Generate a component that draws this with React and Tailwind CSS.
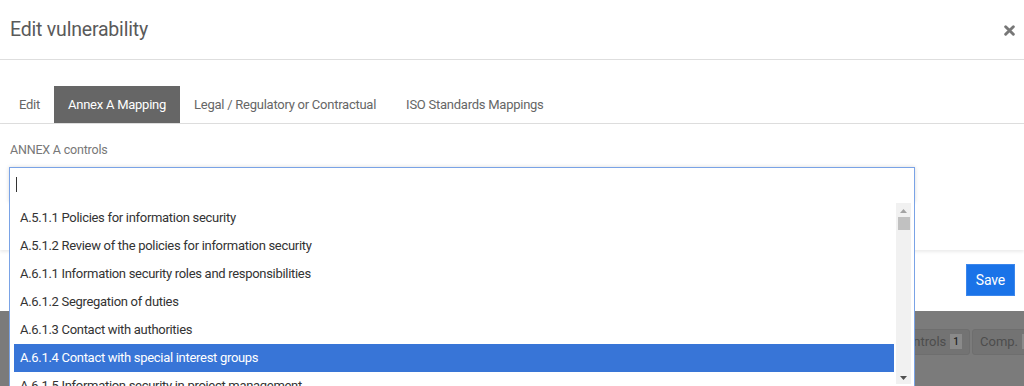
import { useState } from 'react';

const controls = [
  'A.5.1.1 Policies for information security',
  'A.5.1.2 Review of the policies for information security',
  'A.6.1.1 Information security roles and responsibilities',
  'A.6.1.2 Segregation of duties',
  'A.6.1.3 Contact with authorities',
  'A.6.1.4 Contact with special interest groups',
  'A.6.1.5 Information security in project management',
];

const tabs = [
  { label: 'Edit', cls: 'pl-[10px] pr-[14px]' },
  { label: 'Annex A Mapping', cls: 'px-[14px]' },
  { label: 'Legal / Regulatory or Contractual', cls: 'px-[14px]' },
  { label: 'ISO Standards Mappings', cls: 'pl-[16px] pr-[14px]' },
];

export default function App() {
  const [activeTab, setActiveTab] = useState(1);
  const [hovered] = useState(5);

  return (
    <div className="relative w-[1024px] h-[386px] overflow-hidden bg-white font-['Roboto',sans-serif]">
      {/* Header */}
      <div className="h-[60px] flex items-center justify-between pl-[10px] pr-[9px] border-b border-[#dedede]">
        <h1 className="text-[19.5px] text-[#5a5a5a] tracking-[-0.2px]">Edit vulnerability</h1>
        <button className="text-[#777] mt-[1px]">
          <svg width="11" height="11" viewBox="0 0 10 10">
            <path d="M1.5 1.5 L8.5 8.5 M8.5 1.5 L1.5 8.5" stroke="currentColor" strokeWidth="2.6" strokeLinecap="round" />
          </svg>
        </button>
      </div>

      {/* Tabs */}
      <div className="pt-[26px] flex border-b border-[#dedede] pl-[9px]">
        {tabs.map((t, i) => (
          <button
            key={t.label}
            onClick={() => setActiveTab(i)}
            className={`h-[37px] text-[13px] tracking-[-0.25px] ${t.cls} ${
              activeTab === i ? 'bg-[#666] text-white' : 'text-[#666]'
            }`}
          >
            {t.label}
          </button>
        ))}
      </div>

      {/* Body */}
      <div className="px-[9px] pt-[17px] pb-[48px] shadow-[0_2px_3px_rgba(0,0,0,0.08)] relative z-10">
        <div className="text-[12.5px] text-[#777] pl-[1px] tracking-[-0.2px]">ANNEX A controls</div>
        <div className="relative mt-[7px] w-[906px]">
          <div className="h-[35px] border border-[#7aa3e6] shadow-[0_0_4px_rgba(0,0,0,0.15)] flex items-center pl-[6px]">
            <span className="w-[1px] h-[15px] bg-[#333]" />
          </div>
          {/* Dropdown list */}
          <div className="absolute left-0 top-[34px] w-[906px] h-[200px] bg-white border-x border-[#7aa3e6] flex pt-[3px] pl-[4px] z-20">
            <ul className="flex-1 flex flex-col">
              {controls.map((c, i) => (
                <li
                  key={c}
                  className={`h-[28px] shrink-0 flex items-center pl-[6px] text-[13px] tracking-[-0.3px] ${
                    hovered === i ? 'bg-[#3875d7] text-white' : 'text-[#333]'
                  }`}
                >
                  {c}
                </li>
              ))}
            </ul>
            <div className="w-[15px] ml-[2px] mr-[3px] -mt-[1px] bg-[#f1f1f1] flex flex-col items-center h-[181px]">
              <svg width="7" height="4" viewBox="0 0 7 4" className="mt-[6px]">
                <path d="M0 4 L3.5 0 L7 4 Z" fill="#a3a3a3" />
              </svg>
              <div className="w-[12px] h-[13px] bg-[#c1c1c1] mt-[4px]" />
              <div className="flex-1" />
              <svg width="7" height="4" viewBox="0 0 7 4" className="mb-[4px]">
                <path d="M0 0 L3.5 4 L7 0 Z" fill="#505050" />
              </svg>
            </div>
          </div>
        </div>
      </div>

      {/* Footer */}
      <div className="h-[61px] flex items-center justify-end pr-[9px]">
        <button className="h-[32px] px-[9px] bg-[#1a73e8] border border-[#3b86ec] text-white text-[14px] tracking-[-0.2px]">Save</button>
      </div>

      {/* Page behind, dimmed */}
      <div className="h-[80px] bg-[#7b7b7b] flex justify-end pt-[18px]">
        <div className="flex gap-[2px] h-[26px] -mr-[10px]">
          <div className="flex items-center gap-[4px] px-[7px] bg-[#737373] border border-[#6e6e6e] rounded-[3px] text-[13px] text-[#4d4d4d]">
            Controls
            <span className="bg-[#8a8a8a] text-[#222] text-[10px] px-[3px] leading-[15px] font-medium">1</span>
          </div>
          <div className="flex items-center gap-[4px] px-[7px] bg-[#737373] border border-[#6e6e6e] rounded-[3px] text-[13px] text-[#4d4d4d] w-[62px]">
            Comp.
            <span className="bg-[#8a8a8a] text-[#222] text-[10px] px-[2px] leading-[15px] font-medium">19</span>
          </div>
        </div>
      </div>
    </div>
  );
}
